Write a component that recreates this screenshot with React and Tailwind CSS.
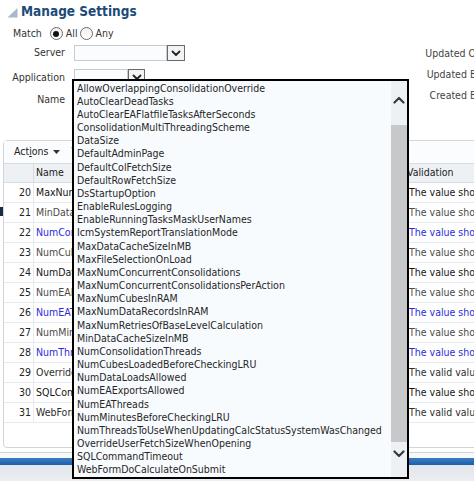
import React from "react";

const FONT = { fontFamily: '"DejaVu Sans Condensed", "DejaVu Sans", sans-serif' };

const items = [
  "AllowOverlappingConsolidationOverride",
  "AutoClearDeadTasks",
  "AutoClearEAFlatfileTasksAfterSeconds",
  "ConsolidationMultiThreadingScheme",
  "DataSize",
  "DefaultAdminPage",
  "DefaultColFetchSize",
  "DefaultRowFetchSize",
  "DsStartupOption",
  "EnableRulesLogging",
  "EnableRunningTasksMaskUserNames",
  "IcmSystemReportTranslationMode",
  "MaxDataCacheSizeInMB",
  "MaxFileSelectionOnLoad",
  "MaxNumConcurrentConsolidations",
  "MaxNumConcurrentConsolidationsPerAction",
  "MaxNumCubesInRAM",
  "MaxNumDataRecordsInRAM",
  "MaxNumRetriesOfBaseLevelCalculation",
  "MinDataCacheSizeInMB",
  "NumConsolidationThreads",
  "NumCubesLoadedBeforeCheckingLRU",
  "NumDataLoadsAllowed",
  "NumEAExportsAllowed",
  "NumEAThreads",
  "NumMinutesBeforeCheckingLRU",
  "NumThreadsToUseWhenUpdatingCalcStatusSystemWasChanged",
  "OverrideUserFetchSizeWhenOpening",
  "SQLCommandTimeout",
  "WebFormDoCalculateOnSubmit",
];

const rows = [
  { n: 20, name: "MaxNumRetriesOfBaseLevelCalculation", v: "The value should be between 1 and 10", tone: "dark" },
  { n: 21, name: "MinDataCacheSizeInMB", v: "The value should be between 1 and 100", tone: "gray" },
  { n: 22, name: "NumConsolidationThreads", v: "The value should be between 1 and 8", tone: "blue" },
  { n: 23, name: "NumCubesLoadedBeforeCheckingLRU", v: "The value should be between 1 and 100", tone: "gray" },
  { n: 24, name: "NumDataLoadsAllowed", v: "The value should be between 1 and 10", tone: "dark" },
  { n: 25, name: "NumEAExportsAllowed", v: "The value should be between 1 and 10", tone: "gray" },
  { n: 26, name: "NumEAThreads", v: "The value should be between 1 and 8", tone: "blue" },
  { n: 27, name: "NumMinutesBeforeCheckingLRU", v: "The value should be between 1 and 60", tone: "gray" },
  { n: 28, name: "NumThreadsToUseWhenUpdatingCalcStatus", v: "The value should be between 1 and 8", tone: "blue" },
  { n: 29, name: "OverrideUserFetchSizeWhenOpening", v: "The valid values are Yes or No", tone: "mid" },
  { n: 30, name: "SQLCommandTimeout", v: "The value should be between 1 and 600", tone: "dark" },
  { n: 31, name: "WebFormDoCalculateOnSubmit", v: "The valid values are Yes or No", tone: "mid" },
];

const toneClass = {
  dark: "text-[#151515]",
  gray: "text-[#4a4a4a]",
  mid: "text-[#2e2e2e]",
  blue: "text-[#2b2bd6]",
};

function Chevron({ up = false }) {
  return (
    <svg width="12" height="8" viewBox="0 0 12 8">
      <path
        d={up ? "M1.5 6.5 L6 2 L10.5 6.5" : "M1.5 1.5 L6 6 L10.5 1.5"}
        fill="none"
        stroke="#3a3a3a"
        strokeWidth="2.2"
        strokeLinecap="round"
        strokeLinejoin="round"
      />
    </svg>
  );
}

function SmallChevron() {
  return (
    <svg width="10" height="7" viewBox="0 0 10 7">
      <path d="M1.5 1.5 L5 5 L8.5 1.5" fill="none" stroke="#222" strokeWidth="1.8" strokeLinecap="round" strokeLinejoin="round" />
    </svg>
  );
}

function Radio({ checked }) {
  return (
    <span className="w-[13px] h-[13px] rounded-full border border-[#6b6b6b] bg-gradient-to-b from-[#f0f0f0] to-white flex items-center justify-center">
      {checked && <span className="w-[6px] h-[6px] rounded-full bg-[#111]" />}
    </span>
  );
}

export default function App() {
  return (
    <div
      className="relative w-[474px] h-[481px] overflow-hidden bg-white text-[10.5px] text-[#333] font-stretch-condensed"
      style={FONT}
    >
      {/* Title */}
      <div className="h-[24px] flex items-center pl-[7px] gap-[3px]">
        <svg width="11" height="10" viewBox="0 0 11 10" className="mt-[1px]">
          <polygon points="10.5,0 10.5,9.5 0.5,9.5" fill="#a7b9ca" />
        </svg>
        <span className="text-[13.5px] font-bold text-[#1d4b78] leading-none">Manage Settings</span>
      </div>

      {/* Search form */}
      <div className="w-[482px] flex justify-between">
        <div className="flex flex-col">
          <div className="h-[19px] flex items-center pl-[13px]">
            <span>Match</span>
            <span className="ml-[8px]"><Radio checked /></span>
            <span className="ml-[3px]">All</span>
            <span className="ml-[2px]"><Radio /></span>
            <span className="ml-[3px]">Any</span>
          </div>
          <div className="h-[20px] flex items-center">
            <span className="w-[66px] text-right pr-[1px]">Server</span>
            <div className="ml-[8px] flex h-[16px]">
              <div className="w-[93px] border border-[#c5ccd3] bg-[#fbfcfd]" />
              <div className="w-[18px] border border-[#6a6a6a] bg-[#f3f3f3] flex items-center justify-center">
                <SmallChevron />
              </div>
            </div>
          </div>
          <div className="h-[30px] flex items-center">
            <span className="w-[66px] text-right pr-[1px]">Application</span>
            <div className="ml-[8px] flex h-[16px] self-start mt-[6px]">
              <div className="w-[54px] border border-[#c5ccd3] bg-[#fbfcfd]" />
              <div className="w-[17px] border border-[#6a6a6a] bg-[#f3f3f3] flex items-center justify-center">
                <SmallChevron />
              </div>
            </div>
          </div>
          <div className="h-[14px] flex items-center">
            <span className="w-[66px] text-right pr-[1px]">Name</span>
          </div>
        </div>
        <div className="flex flex-col items-end pt-[19px] text-[#444]">
          <div className="h-[21px] flex items-center whitespace-nowrap">Updated On</div>
          <div className="h-[21px] flex items-center whitespace-nowrap">Updated By</div>
          <div className="h-[21px] flex items-center whitespace-nowrap">Created By</div>
        </div>
      </div>

      {/* Table panel */}
      <div className="mt-[33px] ml-[3px] w-[520px] h-[308px] border border-[#cfd6dc] rounded-l-[4px] bg-white flex flex-col">
        <div className="h-[22px] flex items-center pl-[10px] gap-[12px] bg-[#fbfcfd]">
          <span className="flex items-center gap-[4px] text-[#222]">
            <span>
              Act<span className="underline">i</span>ons
            </span>
            <svg width="7" height="4" viewBox="0 0 7 4"><polygon points="0,0 7,0 3.5,4" fill="#333" /></svg>
          </span>
          <span className="text-[#222]">View</span>
        </div>
        <div className="h-[20px] grid grid-cols-[30px_372px_1fr] bg-[#eef1f4] border-y border-[#d6dce2] text-[#222]">
          <div className="border-r border-[#d6dce2]" />
          <div className="pl-[2px] flex items-center">Name</div>
          <div className="flex items-center pl-[1px]">Validation</div>
        </div>
        {rows.map((r) => (
          <div key={r.n} className="h-[20px] grid grid-cols-[30px_372px_1fr] border-b border-[#e6e9ed]">
            <div className="flex items-center justify-end pr-[2px] border-r border-[#e6e9ed] text-[#222]">{r.n}</div>
            <div className={`pl-[2px] flex items-center whitespace-nowrap overflow-hidden ${toneClass[r.tone]}`}>{r.name}</div>
            <div className={`pl-[3px] flex items-center whitespace-nowrap overflow-hidden ${toneClass[r.tone]}`}>{r.v}</div>
          </div>
        ))}
      </div>

      {/* Footer bars */}
      <div className="h-[4px]" />
      <div className="h-[1px] bg-[#cdd3d9]" />
      <div className="h-[5px] bg-[#f7f8f9]" />
      <div className="h-[7px] bg-gradient-to-b from-[#3a7cc4] to-[#1b5fa9]" />
      <div className="h-[20px] bg-gradient-to-b from-[#e2e6ea] to-[#eef0f2]" />

      {/* Left splitter marker */}
      <div className="absolute left-0 top-[207px] w-[3px] h-[9px] bg-[#1a2a44]" />

      {/* Dropdown list overlay */}
      <div className="absolute left-[72px] top-[79px] w-[337px] h-[400px] border-2 border-black bg-[#f8fbfe] flex">
        <div className="flex-1 pl-[3px] pt-[0.5px] text-[#262626] leading-[13.17px] overflow-hidden">
          {items.map((it) => (
            <div key={it} className="whitespace-nowrap">{it}</div>
          ))}
        </div>
        <div className="w-[16px] flex flex-col bg-[#eef1f4]">
          <div className="h-[44px] flex justify-center pt-[15px]">
            <Chevron up />
          </div>
          <div className="flex-1 bg-[#c6c8ca]" />
          <div className="h-[35px] flex justify-center pt-[8px]">
            <Chevron />
          </div>
        </div>
      </div>
    </div>
  );
}
